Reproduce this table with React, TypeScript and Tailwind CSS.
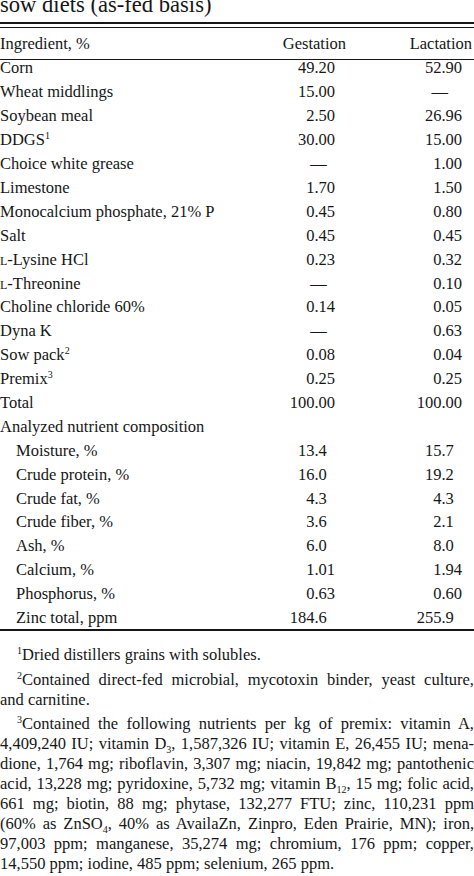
import React from 'react';

type Row = {
  label: React.ReactNode;
  g: string;
  l: string;
  indent?: boolean;
};

const Sup: React.FC<{ children: React.ReactNode }> = ({ children }) => (
  <span className="relative -top-[6px] text-[10px] leading-none">{children}</span>
);

const Sub: React.FC<{ children: React.ReactNode }> = ({ children }) => (
  <span className="relative top-[4px] text-[10px] leading-none">{children}</span>
);

const SmallL = () => <span className="text-[12px]">L</span>;

const rows: Row[] = [
  { label: 'Corn', g: '49.20', l: '52.90' },
  { label: 'Wheat middlings', g: '15.00', l: '—' },
  { label: 'Soybean meal', g: '2.50', l: '26.96' },
  { label: <>DDGS<Sup>1</Sup></>, g: '30.00', l: '15.00' },
  { label: 'Choice white grease', g: '—', l: '1.00' },
  { label: 'Limestone', g: '1.70', l: '1.50' },
  { label: 'Monocalcium phosphate, 21% P', g: '0.45', l: '0.80' },
  { label: 'Salt', g: '0.45', l: '0.45' },
  { label: <><SmallL />-Lysine HCl</>, g: '0.23', l: '0.32' },
  { label: <><SmallL />-Threonine</>, g: '—', l: '0.10' },
  { label: 'Choline chloride 60%', g: '0.14', l: '0.05' },
  { label: 'Dyna K', g: '—', l: '0.63' },
  { label: <>Sow pack<Sup>2</Sup></>, g: '0.08', l: '0.04' },
  { label: <>Premix<Sup>3</Sup></>, g: '0.25', l: '0.25' },
  { label: 'Total', g: '100.00', l: '100.00' },
  { label: 'Analyzed nutrient composition', g: '', l: '' },
  { label: 'Moisture, %', g: '13.4', l: '15.7', indent: true },
  { label: 'Crude protein, %', g: '16.0', l: '19.2', indent: true },
  { label: 'Crude fat, %', g: '4.3', l: '4.3', indent: true },
  { label: 'Crude fiber, %', g: '3.6', l: '2.1', indent: true },
  { label: 'Ash, %', g: '6.0', l: '8.0', indent: true },
  { label: 'Calcium, %', g: '1.01', l: '1.94', indent: true },
  { label: 'Phosphorus, %', g: '0.63', l: '0.60', indent: true },
  { label: 'Zinc total, ppm', g: '184.6', l: '255.9', indent: true },
];

// decimal alignment: one-decimal values get a hidden digit on the right
const Value: React.FC<{ v: string; last?: boolean }> = ({ v, last }) => {
  if (!v) return null;
  if (v === '—') {
    return last ? <span className="pr-[14px]">—</span> : <>—<span className="invisible">0</span></>;
  }
  const oneDec = v.split('.')[1]?.length === 1;
  return (
    <>
      {v}
      {oneDec && <span className="invisible">0</span>}
    </>
  );
};

const Line: React.FC<{ children: React.ReactNode; first?: boolean; last?: boolean }> = ({ children, first, last }) => (
  <div className={`${first ? 'pl-[17px]' : ''} ${last ? 'text-left' : 'text-justify [text-align-last:justify]'}`}>
    {children}
  </div>
);

const App: React.FC = () => {
  return (
    <div className="w-[474px] h-[876px] overflow-hidden bg-white text-[#161616] font-['Liberation_Serif',serif]">
      {/* Title (cut off at top, as in the source) */}
      <div className="mt-[-6px] text-[22.6px] leading-none whitespace-nowrap">sow diets (as-fed basis)</div>

      {/* Double top rule */}
      <div className="mt-[5.4px] h-[2px] bg-[#161616]" />
      <div className="mt-[3px] h-[1.5px] bg-[#161616]" />

      {/* Header */}
      <div className="flex h-[31.5px] items-start pr-[2px] text-[16.5px] leading-[31.5px] border-b border-[#161616]">
        <div className="flex-1">Ingredient, %</div>
        <div className="text-right">Gestation</div>
        <div className="w-[126px] text-right">Lactation</div>
      </div>

      {/* Body */}
      <div className="mt-[-3.5px] text-[16.5px] leading-[23.9px]">
        {rows.map((r, i) => (
          <div key={i} className="flex h-[23.9px] pr-[12px]">
            <div className={`flex-1 whitespace-nowrap ${r.indent ? 'pl-[16px]' : ''}`}>{r.label}</div>
            <div className="w-[100px] text-right whitespace-nowrap">
              <Value v={r.g} />
            </div>
            <div className="w-[127px] text-right whitespace-nowrap">
              <Value v={r.l} last />
            </div>
          </div>
        ))}
      </div>
      <div className="mt-[-1px] h-[2.2px] bg-[#161616]" />

      {/* Footnotes */}
      <div className="mt-[14px] text-[16.5px] leading-[20px]">
        <Line first last>
          <Sup>1</Sup>Dried distillers grains with solubles.
        </Line>

        <div className="mt-[5px]">
          <Line first>
            <Sup>2</Sup>Contained direct-fed microbial, mycotoxin binder, yeast culture,
          </Line>
          <Line last>and carnitine.</Line>
        </div>

        <div className="mt-[4px]">
          <Line first>
            <Sup>3</Sup>Contained the following nutrients per kg of premix: vitamin A,
          </Line>
          <Line>
            4,409,240 IU; vitamin D<Sub>3</Sub>, 1,587,326 IU; vitamin E, 26,455 IU; mena-
          </Line>
          <Line>dione, 1,764 mg; riboflavin, 3,307 mg; niacin, 19,842 mg; pantothenic</Line>
          <Line>
            acid, 13,228 mg; pyridoxine, 5,732 mg; vitamin B<Sub>12</Sub>, 15 mg; folic acid,
          </Line>
          <Line>661 mg; biotin, 88 mg; phytase, 132,277 FTU; zinc, 110,231 ppm</Line>
          <Line>
            (60% as ZnSO<Sub>4</Sub>, 40% as AvailaZn, Zinpro, Eden Prairie, MN); iron,
          </Line>
          <Line>97,003 ppm; manganese, 35,274 mg; chromium, 176 ppm; copper,</Line>
          <Line last>14,550 ppm; iodine, 485 ppm; selenium, 265 ppm.</Line>
        </div>
      </div>
    </div>
  );
};

export default App;
